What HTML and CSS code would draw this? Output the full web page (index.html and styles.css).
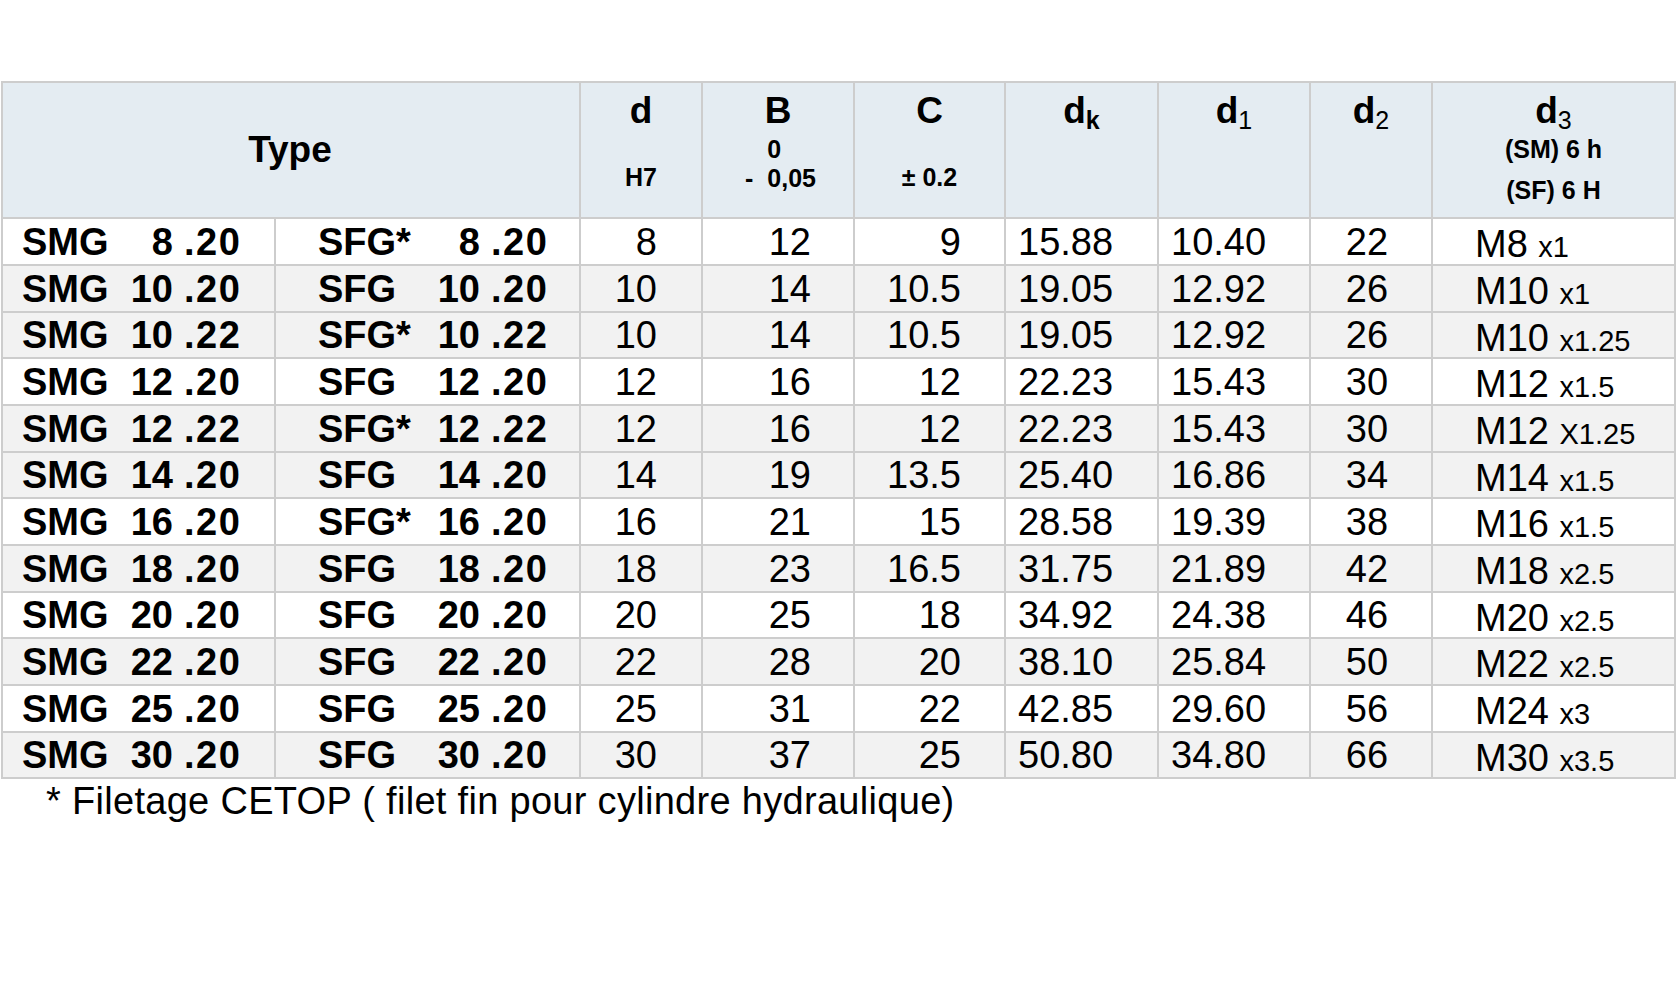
FILE: index.html
```html
<!DOCTYPE html>
<html lang="fr">
<head>
<meta charset="utf-8">
<title>SMG / SFG</title>
<link rel="stylesheet" href="styles.css">
</head>
<body>
<div class="page">
<table class="spec">
  <colgroup>
    <col class="c-smg"><col class="c-sfg"><col class="c-d"><col class="c-b"><col class="c-c"><col class="c-dk"><col class="c-d1"><col class="c-d2"><col class="c-d3">
  </colgroup>
  <thead>
    <tr class="head">
      <th colspan="2" class="type-h">Type</th>
      <th><div class="hd"><div class="big">d</div><div class="sub low">H7</div></div></th>
      <th><div class="hd"><div class="big">B</div><div class="tol"><span class="dash">-</span><span class="tv"><span class="z">0</span><span>0,05</span></span></div></div></th>
      <th><div class="hd"><div class="big">C</div><div class="sub low">± 0.2</div></div></th>
      <th><div class="hd"><div class="big">d<sub class="bsub">k</sub></div></div></th>
      <th><div class="hd"><div class="big">d<sub class="nsub">1</sub></div></div></th>
      <th><div class="hd"><div class="big">d<sub class="nsub">2</sub></div></div></th>
      <th><div class="hd"><div class="big">d<sub class="nsub">3</sub></div><div class="sub mid">(SM) 6 h</div><div class="sub last">(SF) 6 H</div></div></th>
    </tr>
  </thead>
  <tbody>
    <tr class="w"><td><div class="tm"><span>SMG</span><span class="n">8</span><span class="sx">.20</span></div></td><td><div class="tf"><span>SFG*</span><span class="n">8</span><span class="sx">.20</span></div></td><td class="r d">8</td><td class="r b">12</td><td class="r c">9</td><td class="l">15.88</td><td class="l">10.40</td><td class="ctr">22</td><td class="m">M8 <span class="x">x1</span></td></tr>
    <tr class="g"><td><div class="tm"><span>SMG</span><span class="n">10</span><span class="sx">.20</span></div></td><td><div class="tf"><span>SFG</span><span class="n">10</span><span class="sx">.20</span></div></td><td class="r d">10</td><td class="r b">14</td><td class="r c">10.5</td><td class="l">19.05</td><td class="l">12.92</td><td class="ctr">26</td><td class="m">M10 <span class="x">x1</span></td></tr>
    <tr class="g"><td><div class="tm"><span>SMG</span><span class="n">10</span><span class="sx">.22</span></div></td><td><div class="tf"><span>SFG*</span><span class="n">10</span><span class="sx">.22</span></div></td><td class="r d">10</td><td class="r b">14</td><td class="r c">10.5</td><td class="l">19.05</td><td class="l">12.92</td><td class="ctr">26</td><td class="m">M10 <span class="x">x1.25</span></td></tr>
    <tr class="w"><td><div class="tm"><span>SMG</span><span class="n">12</span><span class="sx">.20</span></div></td><td><div class="tf"><span>SFG</span><span class="n">12</span><span class="sx">.20</span></div></td><td class="r d">12</td><td class="r b">16</td><td class="r c">12</td><td class="l">22.23</td><td class="l">15.43</td><td class="ctr">30</td><td class="m">M12 <span class="x">x1.5</span></td></tr>
    <tr class="g"><td><div class="tm"><span>SMG</span><span class="n">12</span><span class="sx">.22</span></div></td><td><div class="tf"><span>SFG*</span><span class="n">12</span><span class="sx">.22</span></div></td><td class="r d">12</td><td class="r b">16</td><td class="r c">12</td><td class="l">22.23</td><td class="l">15.43</td><td class="ctr">30</td><td class="m">M12 <span class="x">X1.25</span></td></tr>
    <tr class="g"><td><div class="tm"><span>SMG</span><span class="n">14</span><span class="sx">.20</span></div></td><td><div class="tf"><span>SFG</span><span class="n">14</span><span class="sx">.20</span></div></td><td class="r d">14</td><td class="r b">19</td><td class="r c">13.5</td><td class="l">25.40</td><td class="l">16.86</td><td class="ctr">34</td><td class="m">M14 <span class="x">x1.5</span></td></tr>
    <tr class="w"><td><div class="tm"><span>SMG</span><span class="n">16</span><span class="sx">.20</span></div></td><td><div class="tf"><span>SFG*</span><span class="n">16</span><span class="sx">.20</span></div></td><td class="r d">16</td><td class="r b">21</td><td class="r c">15</td><td class="l">28.58</td><td class="l">19.39</td><td class="ctr">38</td><td class="m">M16 <span class="x">x1.5</span></td></tr>
    <tr class="g"><td><div class="tm"><span>SMG</span><span class="n">18</span><span class="sx">.20</span></div></td><td><div class="tf"><span>SFG</span><span class="n">18</span><span class="sx">.20</span></div></td><td class="r d">18</td><td class="r b">23</td><td class="r c">16.5</td><td class="l">31.75</td><td class="l">21.89</td><td class="ctr">42</td><td class="m">M18 <span class="x">x2.5</span></td></tr>
    <tr class="w"><td><div class="tm"><span>SMG</span><span class="n">20</span><span class="sx">.20</span></div></td><td><div class="tf"><span>SFG</span><span class="n">20</span><span class="sx">.20</span></div></td><td class="r d">20</td><td class="r b">25</td><td class="r c">18</td><td class="l">34.92</td><td class="l">24.38</td><td class="ctr">46</td><td class="m">M20 <span class="x">x2.5</span></td></tr>
    <tr class="g"><td><div class="tm"><span>SMG</span><span class="n">22</span><span class="sx">.20</span></div></td><td><div class="tf"><span>SFG</span><span class="n">22</span><span class="sx">.20</span></div></td><td class="r d">22</td><td class="r b">28</td><td class="r c">20</td><td class="l">38.10</td><td class="l">25.84</td><td class="ctr">50</td><td class="m">M22 <span class="x">x2.5</span></td></tr>
    <tr class="w"><td><div class="tm"><span>SMG</span><span class="n">25</span><span class="sx">.20</span></div></td><td><div class="tf"><span>SFG</span><span class="n">25</span><span class="sx">.20</span></div></td><td class="r d">25</td><td class="r b">31</td><td class="r c">22</td><td class="l">42.85</td><td class="l">29.60</td><td class="ctr">56</td><td class="m">M24 <span class="x">x3</span></td></tr>
    <tr class="g"><td><div class="tm"><span>SMG</span><span class="n">30</span><span class="sx">.20</span></div></td><td><div class="tf"><span>SFG</span><span class="n">30</span><span class="sx">.20</span></div></td><td class="r d">30</td><td class="r b">37</td><td class="r c">25</td><td class="l">50.80</td><td class="l">34.80</td><td class="ctr">66</td><td class="m">M30 <span class="x">x3.5</span></td></tr>
  </tbody>
</table>
<p class="note">* Filetage CETOP ( filet fin pour cylindre hydraulique)</p>
</div>
</body>
</html>
```

FILE: styles.css
```css
html, body {
  margin: 0;
  padding: 0;
  background: #ffffff;
}
body {
  font-family: "Liberation Sans", Arial, Helvetica, sans-serif;
  color: #000;
}
.page {
  padding: 81px 0 0 1px;
}
.spec {
  border-collapse: collapse;
  table-layout: fixed;
  width: 1675px;
}
.spec th, .spec td {
  border: 2px solid #cdcdcd;
  padding: 0;
}
.c-smg { width: 273px; }
.c-sfg { width: 305px; }
.c-d { width: 122px; }
.c-b { width: 152px; }
.c-c { width: 151px; }
.c-dk { width: 153px; }
.c-d1 { width: 152px; }
.c-d2 { width: 122px; }
.c-d3 { width: 243px; }

.head th {
  background: #e4ecf2;
  height: 134px;
  vertical-align: top;
  font-weight: bold;
}
.head th.type-h {
  vertical-align: middle;
  font-size: 37px;
  text-align: center;
  padding-right: 2px;
}
.hd {
  height: 134px;
  display: flex;
  flex-direction: column;
  align-items: center;
  box-sizing: border-box;
  padding-top: 8px;
}
.big {
  font-size: 37px;
  line-height: 40px;
  height: 40px;
}
.big sub {
  font-size: 25px;
  vertical-align: -6px;
  line-height: 0;
}
.bsub { font-weight: bold; }
.nsub { font-weight: normal; }
.sub {
  font-size: 25px;
  line-height: 28px;
}
.sub.low { margin-top: 32px; }
.sub.mid { margin-top: 4px; }
.sub.last { margin-top: 13px; }
.tol {
  display: flex;
  align-items: flex-end;
  font-size: 25px;
  line-height: 28px;
  margin-top: 4px;
  margin-left: 5px;
}
.dash { margin-right: 14px; }
.tv {
  display: flex;
  flex-direction: column;
  align-items: flex-start;
}
.z { margin-bottom: 1px; }

tbody tr { height: 47px; }
tbody tr:nth-child(3n) { height: 46px; }
tbody tr.w td { background: #ffffff; }
tbody tr.g td { background: #f2f2f2; }
tbody td {
  font-size: 38px;
  line-height: 40px;
  white-space: nowrap;
  vertical-align: middle;
  padding-top: 4px;
}
.tm, .tf {
  display: grid;
  font-weight: bold;
}
.tm { grid-template-columns: 120px 60px 1fr; }
.tm > span:first-child { padding-left: 19px; }
.tf { grid-template-columns: 150px 54px 1fr; }
.tf > span:first-child { padding-left: 42px; }
.n { text-align: right; padding-right: 10px; }
.tf .n { padding-right: 0; }
.sx { letter-spacing: 1.5px; }
.tm .sx { padding-left: 1px; }
.tf .sx { padding-left: 11px; }

td.r { text-align: right; }
td.d { padding-right: 44px; }
td.b { padding-right: 42px; }
td.c { padding-right: 43px; }
td.l { text-align: left; padding-left: 12px; }
td.ctr { text-align: center; padding-right: 8px; }
td.m { text-align: left; padding-left: 42px; padding-top: 5px; line-height: 38px; }
.x { font-size: 29px; line-height: 0; }

.note {
  margin: 0;
  padding-left: 45px;
  font-size: 38px;
  letter-spacing: 0.3px;
  line-height: 44px;
}
```
